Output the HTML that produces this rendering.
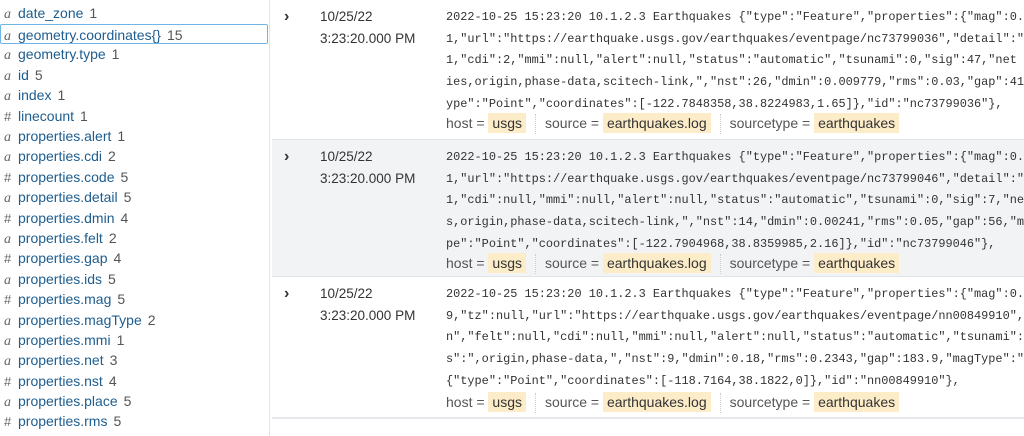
<!DOCTYPE html>
<html><head><meta charset="utf-8"><style>
*{margin:0;padding:0;box-sizing:border-box}
body{width:1024px;height:436px;overflow:hidden;background:#fff;font-family:"Liberation Sans",sans-serif;position:relative}
#left{position:absolute;left:0;top:0;width:270px;height:436px;border-right:1px solid #e1e4e8}
.f{position:absolute;left:0;width:268px;height:20px;line-height:20px;font-size:14px;white-space:nowrap;padding-left:4px}
.f i{font-family:"Liberation Serif",serif;color:#666;font-size:14px;display:inline-block;width:14px}
.f b{font-weight:normal;color:#666;display:inline-block;width:14px;font-size:13px}
.f span{color:#1d5d8f}
.f em{font-style:normal;color:#555;margin-left:6px}
.sel{border:1px solid #6fb5e6;border-radius:2px;padding-left:3px}
#right{position:absolute;left:272px;top:0;right:0;height:436px}
.ev{position:absolute;left:0;right:0;border-bottom:1px solid #e1e4e8;overflow:hidden}
.chev{position:absolute;left:12px;font-size:16px;font-weight:bold;color:#333}
.tm{position:absolute;left:48px;font-size:13.5px;color:#333;line-height:22px}
.raw{position:absolute;left:174px;font-family:"Liberation Mono",monospace;font-size:11.9px;line-height:21.7px;color:#333;white-space:pre}
.flds{position:absolute;left:174px;font-size:14px;color:#555;white-space:nowrap;line-height:22px}
.flds u{text-decoration:none;background:#fdecc8;color:#333;padding:2px 4px}
.sep{display:inline-block;width:0;height:20px;border-left:1px dotted #ccc;vertical-align:middle;margin:0 9px}
</style></head><body>
<div id="left">
<div class="f" style="top:3px"><i>a</i><span>date_zone</span><em>1</em></div>
<div class="f sel" style="top:24px"><i>a</i><span>geometry.coordinates{}</span><em>15</em></div>
<div class="f" style="top:44px"><i>a</i><span>geometry.type</span><em>1</em></div>
<div class="f" style="top:65px"><i>a</i><span>id</span><em>5</em></div>
<div class="f" style="top:85px"><i>a</i><span>index</span><em>1</em></div>
<div class="f" style="top:106px"><b>#</b><span>linecount</span><em>1</em></div>
<div class="f" style="top:126px"><i>a</i><span>properties.alert</span><em>1</em></div>
<div class="f" style="top:146px"><i>a</i><span>properties.cdi</span><em>2</em></div>
<div class="f" style="top:167px"><b>#</b><span>properties.code</span><em>5</em></div>
<div class="f" style="top:187px"><i>a</i><span>properties.detail</span><em>5</em></div>
<div class="f" style="top:208px"><b>#</b><span>properties.dmin</span><em>4</em></div>
<div class="f" style="top:228px"><i>a</i><span>properties.felt</span><em>2</em></div>
<div class="f" style="top:248px"><b>#</b><span>properties.gap</span><em>4</em></div>
<div class="f" style="top:269px"><i>a</i><span>properties.ids</span><em>5</em></div>
<div class="f" style="top:289px"><b>#</b><span>properties.mag</span><em>5</em></div>
<div class="f" style="top:310px"><i>a</i><span>properties.magType</span><em>2</em></div>
<div class="f" style="top:330px"><i>a</i><span>properties.mmi</span><em>1</em></div>
<div class="f" style="top:350px"><i>a</i><span>properties.net</span><em>3</em></div>
<div class="f" style="top:371px"><b>#</b><span>properties.nst</span><em>4</em></div>
<div class="f" style="top:391px"><i>a</i><span>properties.place</span><em>5</em></div>
<div class="f" style="top:411px"><b>#</b><span>properties.rms</span><em>5</em></div>
</div>
<div id="right">
<div class="ev" style="top:0;height:140px;background:#fff">
<div class="chev" style="top:8px">&#8250;</div>
<div class="tm" style="top:6px">10/25/22<br>3:23:20.000 PM</div>
<div class="raw" style="top:7px">2022-10-25 15:23:20 10.1.2.3 Earthquakes {"type":"Feature","properties":{"mag":0.
1,"url":"https://earthquake.usgs.gov/earthquakes/eventpage/nc73799036","detail":"
1,"cdi":2,"mmi":null,"alert":null,"status":"automatic","tsunami":0,"sig":47,"net
ies,origin,phase-data,scitech-link,","nst":26,"dmin":0.009779,"rms":0.03,"gap":41
ype":"Point","coordinates":[-122.7848358,38.8224983,1.65]},"id":"nc73799036"},</div>
<div class="flds" style="top:112px">host = <u>usgs</u><span class="sep"></span>source = <u>earthquakes.log</u><span class="sep"></span>sourcetype = <u>earthquakes</u></div>
</div>
<div class="ev" style="top:140px;height:137px;background:#f2f3f5">
<div class="chev" style="top:8px">&#8250;</div>
<div class="tm" style="top:6px">10/25/22<br>3:23:20.000 PM</div>
<div class="raw" style="top:7px">2022-10-25 15:23:20 10.1.2.3 Earthquakes {"type":"Feature","properties":{"mag":0.
1,"url":"https://earthquake.usgs.gov/earthquakes/eventpage/nc73799046","detail":"
1,"cdi":null,"mmi":null,"alert":null,"status":"automatic","tsunami":0,"sig":7,"ne
s,origin,phase-data,scitech-link,","nst":14,"dmin":0.00241,"rms":0.05,"gap":56,"m
pe":"Point","coordinates":[-122.7904968,38.8359985,2.16]},"id":"nc73799046"},</div>
<div class="flds" style="top:112px">host = <u>usgs</u><span class="sep"></span>source = <u>earthquakes.log</u><span class="sep"></span>sourcetype = <u>earthquakes</u></div>
</div>
<div class="ev" style="top:277px;height:142px;background:#fff;border-bottom:2px solid #e6e8eb">
<div class="chev" style="top:8px">&#8250;</div>
<div class="tm" style="top:6px">10/25/22<br>3:23:20.000 PM</div>
<div class="raw" style="top:7px">2022-10-25 15:23:20 10.1.2.3 Earthquakes {"type":"Feature","properties":{"mag":0.
9,"tz":null,"url":"https://earthquake.usgs.gov/earthquakes/eventpage/nn00849910",
n","felt":null,"cdi":null,"mmi":null,"alert":null,"status":"automatic","tsunami":
s":",origin,phase-data,","nst":9,"dmin":0.18,"rms":0.2343,"gap":183.9,"magType":"
{"type":"Point","coordinates":[-118.7164,38.1822,0]},"id":"nn00849910"},</div>
<div class="flds" style="top:114px">host = <u>usgs</u><span class="sep"></span>source = <u>earthquakes.log</u><span class="sep"></span>sourcetype = <u>earthquakes</u></div>
</div>
</div>
</body></html>
